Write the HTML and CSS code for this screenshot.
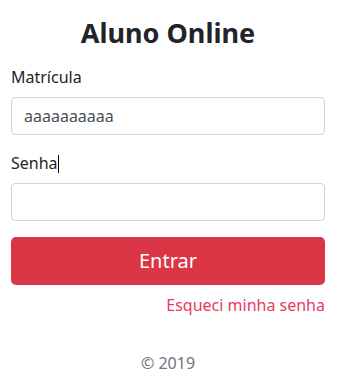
FILE: index.html
```html
<!DOCTYPE html>
<html lang="pt-BR">
<head>
<meta charset="utf-8">
<title>Aluno Online</title>
<link rel="stylesheet" href="styles.css">
</head>
<body>
<main class="container">
  <h1 class="title">Aluno Online</h1>
  <form class="login-form">
    <div class="form-group">
      <label class="form-label" for="matricula">Matrícula</label>
      <input class="form-input" id="matricula" type="text" value="aaaaaaaaaa">
    </div>
    <div class="form-group">
      <label class="form-label" for="senha">Senha<span class="caret"></span></label>
      <input class="form-input" id="senha" type="password">
    </div>
    <button class="btn-submit" type="button">Entrar</button>
    <div class="forgot-row"><a class="forgot-link" href="#">Esqueci minha senha</a></div>
  </form>
  <footer class="footer">© 2019</footer>
</main>
</body>
</html>
```

FILE: styles.css
```css
html, body {
  margin: 0;
  padding: 0;
  background: #fff;
}
body {
  font-family: "Noto Sans", "Open Sans", sans-serif;
  font-size: 16px;
  line-height: 1.5;
  color: #212529;
}
.container {
  width: 314px;
  padding: 0 11px;
}
.title {
  margin: 0;
  padding-top: 18px;
  height: 48px;
  box-sizing: border-box;
  text-align: center;
  font-size: 27px;
  line-height: 30px;
  font-weight: 700;
  color: #212529;
}
.login-form {
  margin-top: 17px;
}
.form-group {
  margin-bottom: 16px;
}
.form-label {
  display: block;
  margin-bottom: 8px;
  font-size: 16px;
  line-height: 24px;
}
.caret {
  display: inline-block;
  width: 1px;
  height: 18px;
  background: #000;
  vertical-align: -4px;
}
.form-input {
  display: block;
  box-sizing: border-box;
  width: 100%;
  height: 38px;
  padding: 6px 12px;
  border: 1px solid #ced4da;
  border-radius: 4px;
  font-family: inherit;
  font-size: 16px;
  color: #495057;
  background: #fff;
  outline: none;
}
.btn-submit {
  display: block;
  width: 100%;
  height: 48px;
  border: none;
  border-radius: 5px;
  background: #dc3545;
  color: #fff;
  font-family: inherit;
  font-size: 20px;
  line-height: 1.5;
  cursor: pointer;
}
.forgot-row {
  margin-top: 8px;
  text-align: right;
}
.forgot-link {
  color: #e63b5e;
  text-decoration: none;
  font-size: 16px;
}
.footer {
  margin-top: 34px;
  text-align: center;
  color: #6c757d;
  font-size: 16px;
}
```
